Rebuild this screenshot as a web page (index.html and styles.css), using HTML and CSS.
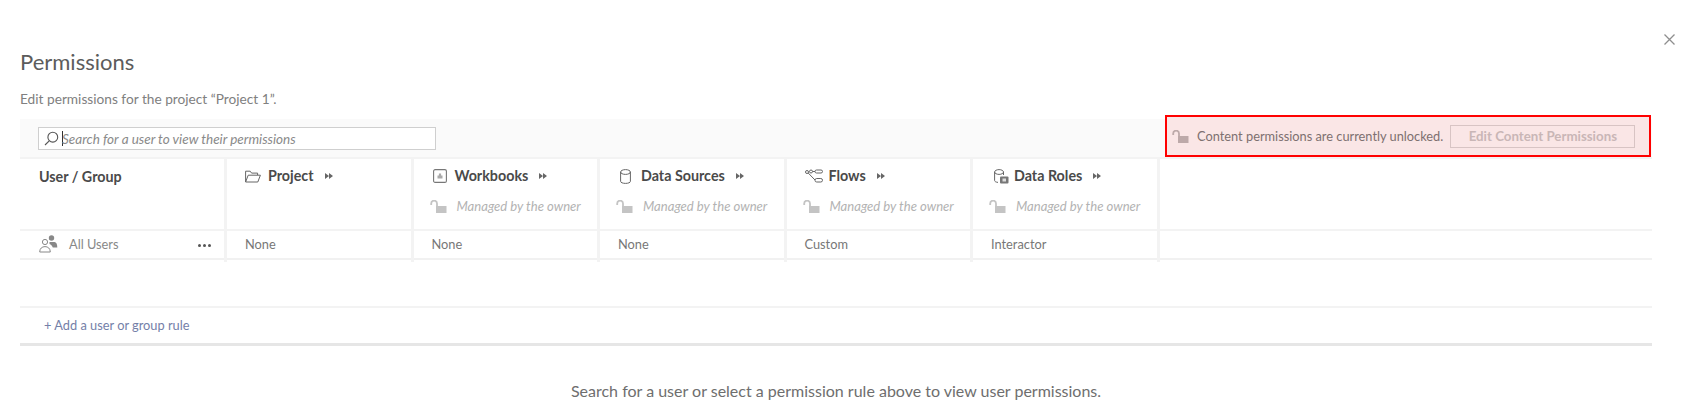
FILE: index.html
```html
<!DOCTYPE html>
<html lang="en">
<head>
<meta charset="utf-8">
<title>Permissions</title>
<link rel="stylesheet" href="styles.css">
</head>
<body>
<svg class="defs" width="0" height="0" aria-hidden="true">
  <symbol id="lock" viewBox="0 0 17 13">
    <path d="M1.200 5V3.600a2.900 2.900 0 0 1 5.800 0V6" fill="none" stroke="currentColor" stroke-width="1.800"/>
    <rect x="6" y="6" width="10.500" height="7" fill="currentColor"/>
  </symbol>
  <symbol id="arrows" viewBox="0 0 8 6">
    <path d="M0 0l4 3-4 3zM4 0l4 3-4 3z" fill="currentColor"/>
  </symbol>
</svg>
<main class="dialog">
  <button class="close" aria-label="Close">
    <svg width="11" height="11" viewBox="0 0 11 11"><path d="M.5.5l10 10M10.500.5l-10 10" stroke="#8e8e8e" stroke-width="1.300" fill="none"/></svg>
  </button>
  <h1 class="title">Permissions</h1>
  <p class="subtitle">Edit permissions for the project “Project 1”.</p>

  <div class="toolbar">
    <div class="search">
      <svg class="search-icon" width="15" height="15" viewBox="0 0 15 15"><circle cx="8.800" cy="6.200" r="4.900" fill="none" stroke="#555" stroke-width="1.100"/><path d="M5.200 9.800L1 14" stroke="#555" stroke-width="1.100"/></svg>
      <span class="caret"></span>
      <span class="placeholder">Search for a user to view their permissions</span>
    </div>
    <div class="notice">
      <svg class="notice-lock" width="17" height="13"><use href="#lock"/></svg>
      <span class="notice-text">Content permissions are currently unlocked.</span>
      <button class="edit-btn">Edit Content Permissions</button>
    </div>
  </div>

  <div class="grid head">
    <div class="cell first"><span class="col-title">User / Group</span></div>
    <div class="cell">
      <div class="col-head">
        <svg class="ico ico-project" width="16" height="13" viewBox="0 0 16 13"><path d="M.6 12V1.200h4.600l1.400 1.900h6v2M.6 12l2.600-6.800h12.200L12.800 12z" fill="none" stroke="#666" stroke-width="1"/></svg>
        <span class="col-title">Project</span>
        <svg class="arrows" width="8" height="6"><use href="#arrows"/></svg>
      </div>
    </div>
    <div class="cell">
      <div class="col-head">
        <svg class="ico ico-wb" width="14" height="14" viewBox="0 0 14 14"><rect x=".6" y=".6" width="12.800" height="12.800" rx="1.500" fill="none" stroke="#777" stroke-width="1.100"/><path d="M4.500 9.500V6.500h1.400V4.500h2.200v2h1.400v3z" fill="#aaa"/></svg>
        <span class="col-title">Workbooks</span>
        <svg class="arrows" width="8" height="6"><use href="#arrows"/></svg>
      </div>
      <div class="managed"><svg class="lock" width="17" height="13"><use href="#lock"/></svg><span>Managed by the owner</span></div>
    </div>
    <div class="cell">
      <div class="col-head">
        <svg class="ico ico-ds" width="11" height="15" viewBox="0 0 11 15"><path d="M.6 3v9.400c0 1.100 2.200 2 4.900 2s4.900-.9 4.900-2V3M.6 3c0-1.300 2.200-2.400 4.900-2.400s4.900 1.100 4.900 2.400-2.200 2.400-4.900 2.400S.6 4.300.6 3z" fill="none" stroke="#666" stroke-width="1"/></svg>
        <span class="col-title">Data Sources</span>
        <svg class="arrows" width="8" height="6"><use href="#arrows"/></svg>
      </div>
      <div class="managed"><svg class="lock" width="17" height="13"><use href="#lock"/></svg><span>Managed by the owner</span></div>
    </div>
    <div class="cell">
      <div class="col-head">
        <svg class="ico ico-flows" width="18" height="14" viewBox="0 0 18 14"><circle cx="2" cy="3" r="1.500" fill="none" stroke="#666"/><circle cx="6" cy="2.500" r="1.500" fill="none" stroke="#666"/><rect x="10" y="1" width="7.500" height="3" rx="1.500" fill="none" stroke="#666"/><rect x="10" y="9.500" width="7.500" height="3.500" rx="1.700" fill="none" stroke="#666"/><path d="M3.200 4l6.800 7M7.500 2.500H10" fill="none" stroke="#666"/></svg>
        <span class="col-title">Flows</span>
        <svg class="arrows" width="8" height="6"><use href="#arrows"/></svg>
      </div>
      <div class="managed"><svg class="lock" width="17" height="13"><use href="#lock"/></svg><span>Managed by the owner</span></div>
    </div>
    <div class="cell">
      <div class="col-head">
        <svg class="ico ico-roles" width="15" height="15" viewBox="0 0 15 15"><path d="M.6 3v8.500c0 1 1.400 1.700 3.400 1.900M9.500 3v3M.6 3c0-1.300 2-2.400 4.450-2.400S9.500 1.700 9.500 3 7.500 5.400 5.050 5.400.6 4.300.6 3z" fill="none" stroke="#666" stroke-width="1"/><rect x="6" y="7.500" width="8.500" height="7" rx="1" fill="#777"/><rect x="8.500" y="9.500" width="3.500" height="3" fill="#ddd"/></svg>
        <span class="col-title">Data Roles</span>
        <svg class="arrows" width="8" height="6"><use href="#arrows"/></svg>
      </div>
      <div class="managed"><svg class="lock" width="17" height="13"><use href="#lock"/></svg><span>Managed by the owner</span></div>
    </div>
    <div class="cell last"></div>
  </div>

  <div class="grid row">
    <div class="cell first user">
      <svg class="user-ico" width="19" height="18" viewBox="0 0 19 18"><circle cx="6" cy="7" r="2.600" fill="none" stroke="#888"/><path d="M.7 17c0-3.500 2.300-5.400 5.300-5.400s5.300 1.900 5.300 5.400z" fill="none" stroke="#888"/><circle cx="12.500" cy="3" r="2.700" fill="#888"/><path d="M10.500 7h5c1.800.3 2.800 2 2.800 5.500h-4.500c-.8-2-1.800-3-3.300-3.600z" fill="#888"/></svg>
      <span class="user-name">All Users</span>
      <span class="dots"><i></i><i></i><i></i></span>
    </div>
    <div class="cell val">None</div>
    <div class="cell val">None</div>
    <div class="cell val">None</div>
    <div class="cell val">Custom</div>
    <div class="cell val">Interactor</div>
    <div class="cell last"></div>
  </div>

  <div class="add-row"><a class="add-link">+ Add a user or group rule</a></div>
  <p class="hint">Search for a user or select a permission rule above to view user permissions.</p>
</main>
</body>
</html>
```
FILE: styles.css
```css
* { box-sizing: border-box; }
html, body { margin: 0; padding: 0; background: #fff; }
body {
  width: 1690px;
  height: 412px;
  overflow: hidden;
  font-family: Lato, "Liberation Sans", sans-serif;
  color: #666;
}
.defs { position: absolute; }
.dialog { position: relative; padding: 49px 38px 0 20px; }
.close {
  position: absolute;
  left: 1664px;
  top: 34px;
  width: 11px;
  height: 11px;
  padding: 0;
  border: 0;
  background: none;
  display: block;
  line-height: 0;
}
.title {
  margin: 0;
  height: 26px;
  line-height: 26px;
  font-size: 22px;
  font-weight: 400;
  color: #5c5c5c;
}
.subtitle {
  margin: 15px 0 0;
  height: 18px;
  line-height: 18px;
  font-size: 13.700px;
  color: #808080;
}
.toolbar {
  margin-top: 11px;
  height: 38px;
  background: #fafafa;
  display: flex;
  justify-content: space-between;
  align-items: flex-start;
  padding-left: 18px;
  padding-right: 1px;
}
.search {
  margin-top: 8px;
  width: 398px;
  height: 23px;
  border: 1px solid #cfcfcf;
  background: #fff;
  display: flex;
  align-items: center;
  padding-left: 5px;
}
.search-icon { flex: none; }
.caret { width: 1px; height: 15px; background: #333; margin-left: 3px; flex: none; }
.placeholder { font-size: 13.500px; font-style: italic; color: #8a8a8a; margin-left: -1px; }
.notice {
  margin-top: -4px;
  width: 486px;
  height: 42px;
  border: 2px solid #f00;
  background: #fae6e6;
  display: flex;
  align-items: center;
  padding-left: 5px;
}
.notice-lock { color: #bda9a9; flex: none; width: 17px; height: 13px; }
.notice-text { margin-left: 8px; font-size: 12.800px; color: #7d7070; white-space: nowrap; }
.edit-btn {
  margin-left: 7px;
  width: 185px;
  height: 23px;
  border: 1px solid #d8c4c4;
  background: transparent;
  padding: 0;
  font-family: inherit;
  font-size: 13.300px;
  font-weight: 700;
  color: #c9b6b6;
}
.grid {
  display: grid;
  grid-template-columns: 207px repeat(5, 186.500px) 1fr;
}
.head {
  height: 74px;
  border-top: 2px solid #f3f3f3;
  border-bottom: 2px solid #f3f3f3;
}
.cell { border-right: 3px solid #f3f3f3; padding-left: 18px; min-width: 0; }
.cell.last { border-right: 0; }
.cell.first { padding-left: 19px; }
.head .cell { padding-top: 7px; }
.col-head { display: flex; align-items: center; height: 20px; }
.col-title { font-size: 14.300px; font-weight: 700; color: #4a4a4a; line-height: 20px; white-space: nowrap; }
.ico { flex: none; margin-right: 7px; }
.ico-wb { margin-left: 1px; margin-right: 8px; }
.ico-ds { margin-left: 2px; margin-right: 10px; }
.ico-flows { margin-left: 0; margin-right: 6px; }
.ico-roles { margin-left: 3px; margin-right: 5px; }
.arrows { color: #666; margin-left: 11px; flex: none; width: 8px; height: 6px; }
.managed {
  display: flex;
  align-items: center;
  height: 20px;
  margin-top: 10px;
  font-size: 13.100px;
  font-style: italic;
  color: #b3b3b3;
  margin-left: -2px;
  white-space: nowrap;
}
.lock { color: #c4c4c4; flex: none; margin-right: 10px; width: 17px; height: 13px; }
.row {
  height: 31px;
  background: linear-gradient(#fff 0 27px, #f1f1f1 27px 29px, #fff 29px);
}
.row .cell { height: 31px; }
.val { font-size: 12.800px; line-height: 26px; color: #777; }
.user { position: relative; display: flex; align-items: flex-start; padding-top: 4px; }
.user-ico { flex: none; }
.user-name { margin-left: 11px; font-size: 12.800px; line-height: 20px; color: #888; margin-top: -1px; }
.dots { position: absolute; left: 178px; top: 13px; display: flex; gap: 2px; }
.dots i { width: 3px; height: 3px; border-radius: 50%; background: #555; display: block; }
.add-row {
  margin-top: 44px;
  height: 40px;
  border-top: 2px solid #f3f3f3;
  border-bottom: 3px solid #e6e6e6;
  padding-left: 24px;
  line-height: 32px;
}
.add-link { font-size: 12.800px; color: #7480a8; }
.hint {
  margin: 35px 0 0;
  text-align: center;
  font-size: 16px;
  line-height: 20px;
  color: #6e6e6e;
}
```
